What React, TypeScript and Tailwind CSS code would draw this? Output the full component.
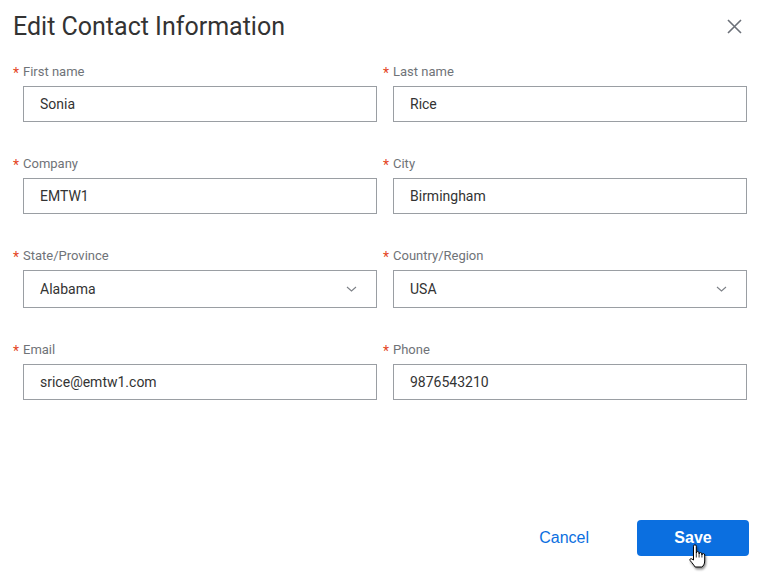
import { useState } from "react";

type Field = {
  label: string;
  value: string;
  select?: boolean;
};

const fields: Field[] = [
  { label: "First name", value: "Sonia" },
  { label: "Last name", value: "Rice" },
  { label: "Company", value: "EMTW1" },
  { label: "City", value: "Birmingham" },
  { label: "State/Province", value: "Alabama", select: true },
  { label: "Country/Region", value: "USA", select: true },
  { label: "Email", value: "srice@emtw1.com" },
  { label: "Phone", value: "9876543210" },
];

function Chevron() {
  return (
    <svg width="11" height="6" viewBox="0 0 11 6" fill="none">
      <path d="M1 1l4.5 4L10 1" stroke="#7d8187" strokeWidth="1.1" />
    </svg>
  );
}

function HandCursor() {
  return (
    <svg
      width="20"
      height="25"
      viewBox="0 0 20 25"
      className="pointer-events-none absolute left-[50px] top-[24px] drop-shadow-[1px_2px_1px_rgba(0,0,0,0.45)]"
    >
      <path
        d="M6.5 2.2a1.4 1.4 0 0 1 2.8 0V9a1.4 1.4 0 0 1 2.8 0v1a1.4 1.4 0 0 1 2.8 0v1a1.4 1.4 0 0 1 2.8 0v6c0 3-1.4 5-2.8 6H8.2c-1-1.5-3-4-5-6.4-1-1.2.5-2.6 1.7-1.6L6.5 16z"
        fill="#fff"
        stroke="#000"
        strokeWidth="1"
        strokeLinejoin="round"
      />
      <path d="M9.3 9v4.5M12.1 10v3.5M14.9 11v2.5" stroke="#000" strokeWidth="0.8" />
    </svg>
  );
}

function FormField({ field }: { field: Field }) {
  const [value, setValue] = useState(field.value);

  return (
    <div className="flex flex-col">
      <label className="-ml-[10px] flex h-4 items-center pt-px text-[13px] leading-4 text-[#6f7378]">
        <span className="w-[10px] pt-[3px] text-[14px] text-[#e4461e]">*</span>
        {field.label}
      </label>
      {field.select ? (
        <div className="mt-[7px] flex h-[38px] items-center justify-between border border-[#9a9ea3] pl-4 pr-[19px] text-[14px] text-[#333]">
          <span>{value}</span>
          <Chevron />
        </div>
      ) : (
        <input
          value={value}
          onChange={(e) => setValue(e.target.value)}
          className="mt-[7px] h-9 border border-[#9a9ea3] px-4 text-[14px] text-[#333] outline-none"
        />
      )}
    </div>
  );
}

export default function App() {
  return (
    <main
      className="flex h-[573px] w-[759px] flex-col bg-white"
      style={{ fontFamily: "Roboto, 'Noto Sans', sans-serif" }}
    >
      <div className="flex items-start justify-between pl-[13px] pr-[17px] pt-[11px]">
        <h1 className="text-[25px] leading-8 text-[#333]">Edit Contact Information</h1>
        <button className="mt-[8px] text-[#6b7078]" aria-label="Close">
          <svg width="15" height="15" viewBox="0 0 15 15">
            <path d="M1 1l13 13M14 1L1 14" stroke="currentColor" strokeWidth="1.6" />
          </svg>
        </button>
      </div>

      <div className="mt-[20px] grid grid-cols-2 gap-x-4 gap-y-[33px] pl-[23px] pr-[12px]">
        {fields.map((f) => (
          <FormField key={f.label} field={f} />
        ))}
      </div>

      <div
        className="mt-auto flex items-center justify-end gap-[24px] pb-[17px] pr-[10px]"
        style={{ fontFamily: "'Liberation Sans', Arial, sans-serif" }}
      >
        <button className="px-6 text-[16px] text-[#0b6fe0]">Cancel</button>
        <button className="relative h-9 w-[112px] rounded bg-[#0b6fe0] text-[16px] font-bold text-white">
          Save
          <HandCursor />
        </button>
      </div>
    </main>
  );
}
